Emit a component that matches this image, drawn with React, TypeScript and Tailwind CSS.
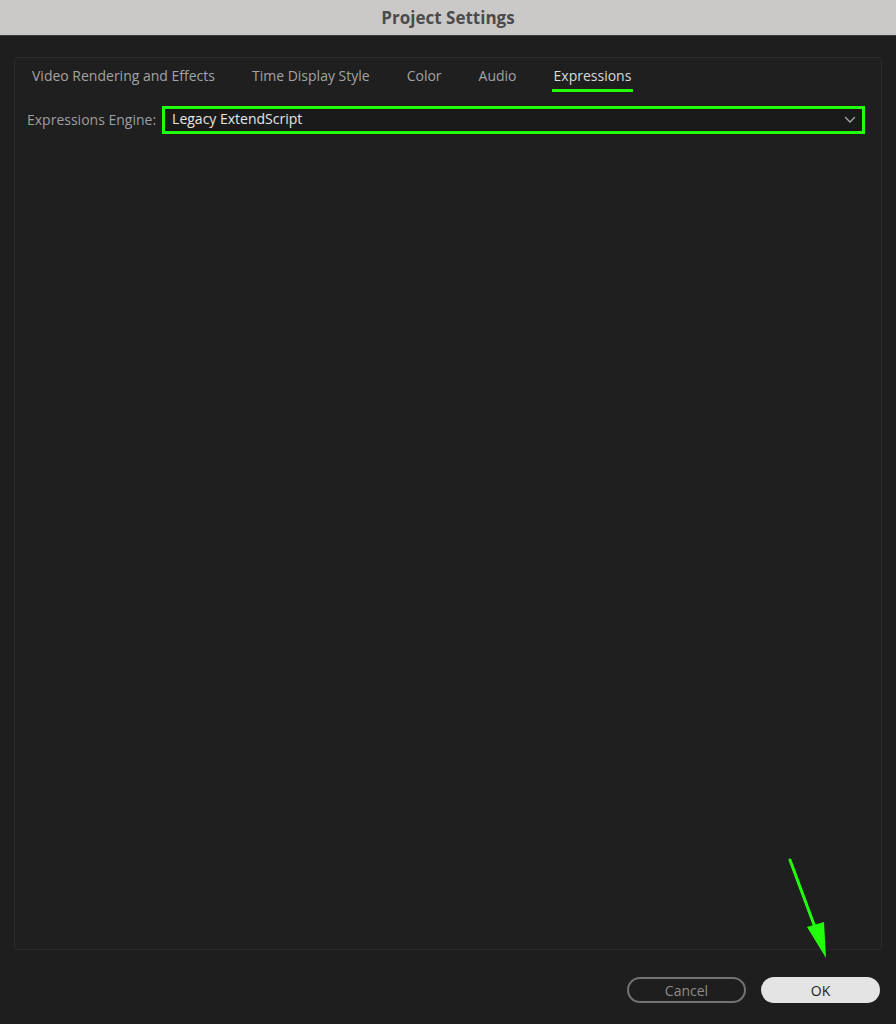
import type { FC } from 'react';

const tabs = ['Video Rendering and Effects', 'Time Display Style', 'Color', 'Audio', 'Expressions'];
const activeTab = 'Expressions';

const font = { fontFamily: '"Open Sans", "Liberation Sans", sans-serif' };

const Chevron: FC = () => (
  <svg width="12" height="8" viewBox="0 0 12 8" fill="none">
    <path d="M1.5 1.5 L6 6 L10.5 1.5" stroke="#a8a8a8" strokeWidth="1.4" strokeLinecap="round" strokeLinejoin="round" />
  </svg>
);

const App: FC = () => {
  return (
    <div className="relative flex h-[1024px] w-[896px] flex-col overflow-hidden bg-[#1e1e1e]" style={font}>
      <div className="flex h-[36px] shrink-0 items-center justify-center border-b border-[#3c3c3c] bg-[#cac9c7]">
        <span className="text-[17px] font-bold text-[#4b4b4b]">Project Settings</span>
      </div>

      <div className="px-[14px] pt-[21px]">
        <div className="flex h-[893px] flex-col rounded-[3px] border border-[#2a2a2a] bg-[#1f1f1f]">
          <div className="flex gap-[37px] pl-[17px] pt-[8px]">
            {tabs.map((tab) => (
              <div key={tab} className="flex flex-col items-center">
                <span
                  className={`text-[14px] leading-[20px] ${tab === activeTab ? 'text-[#dadada]' : 'text-[#a3a3a3]'}`}
                >
                  {tab}
                </span>
                <div className={`mt-[3px] h-[3px] w-[calc(100%+4px)] ${tab === activeTab ? 'bg-[#22ff0a]' : 'bg-transparent'}`} />
              </div>
            ))}
          </div>

          <div className="flex items-center gap-[6px] pl-[12px] pr-[16px] pt-[14px]">
            <span className="text-[14px] leading-[18px] text-[#9e9e9e]">Expressions Engine:</span>
            <div className="flex h-[28px] flex-1 items-center justify-between border-[3px] border-[#22ff0a] bg-[#1a1a1a] pl-[7px] pr-[6px]">
              <span className="pb-[2px] text-[14px] leading-[18px] text-[#e6e6e6]">Legacy ExtendScript</span>
              <Chevron />
            </div>
          </div>
        </div>
      </div>

      <div className="flex justify-end gap-[15px] pr-[16px] pt-[27px]">
        <button className="h-[26px] w-[119px] rounded-full border-2 border-[#727272] text-[14px] text-[#8c8c8c]">
          Cancel
        </button>
        <button className="h-[26px] w-[119px] rounded-full bg-[#e4e4e4] text-[14px] text-[#1e1e1e]">OK</button>
      </div>

      <svg className="absolute left-0 top-0" width="896" height="1024" viewBox="0 0 896 1024">
        <line x1="790" y1="860" x2="816" y2="930" stroke="#22ff0a" strokeWidth="3" strokeLinecap="round" />
        <polygon points="807,927 824,922 826,958" fill="#22ff0a" />
      </svg>
    </div>
  );
};

export default App;
